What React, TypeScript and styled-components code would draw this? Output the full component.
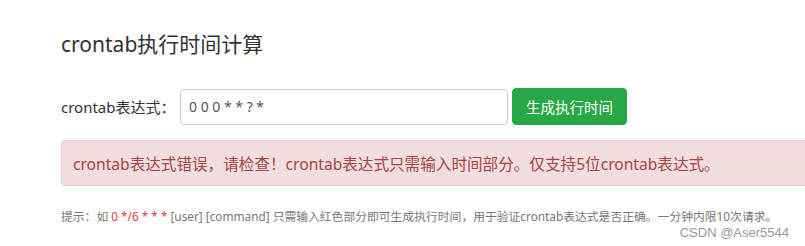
import React, { useState } from 'react';
import styled, { createGlobalStyle } from 'styled-components';

const GlobalStyle = createGlobalStyle`
  html, body {
    margin: 0;
    padding: 0;
    background: #fff;
    overflow: hidden;
  }
  body {
    font-family: "Noto Sans", "Noto Sans CJK SC", sans-serif;
    color: #333;
  }
`;

const Page = styled.div`
  position: relative;
  width: 805px;
  height: 246px;
  overflow: hidden;
`;

const Container = styled.div`
  width: 780px;
  padding: 24px 0 0 61px;
`;

const Title = styled.h3`
  margin: 0 0 24px;
  font-size: 21px;
  font-weight: 400;
  line-height: 40px;
  color: #333;
`;

const Form = styled.form`
  display: flex;
  align-items: center;
  margin-bottom: 15px;
`;

const Label = styled.label`
  font-size: 15px;
  color: #333;
  margin-right: 4px;
  width: 115px;
`;

const Input = styled.input`
  box-sizing: border-box;
  width: 328px;
  height: 36px;
  padding: 0 8px;
  font-family: "Noto Sans", "Noto Sans CJK SC", sans-serif;
  font-size: 14px;
  color: #555;
  border: 1px solid #ccc;
  border-radius: 4px;
  outline: none;
`;

const Button = styled.button`
  box-sizing: border-box;
  margin-left: 4px;
  height: 37px;
  padding: 0 13px;
  font-family: "Noto Sans CJK SC", sans-serif;
  font-size: 14.5px;
  color: #fff;
  background: #28a745;
  border: 1px solid #28a745;
  border-radius: 4px;
  cursor: pointer;
`;

const Alert = styled.div`
  box-sizing: border-box;
  width: 780px;
  height: 46px;
  display: flex;
  align-items: center;
  padding: 0 11px;
  font-size: 15.6px;
  color: #a94442;
  background: #f2dede;
  border: 1px solid #ebccd1;
  border-radius: 4px;
  white-space: nowrap;
`;

const Hint = styled.p`
  margin: 21px 0 0;
  font-size: 11.8px;
  color: #777;
  white-space: nowrap;
`;

const Red = styled.span`
  color: #e4393c;
`;

const Watermark = styled.div`
  position: absolute;
  right: 16px;
  bottom: 6px;
  font-family: "Liberation Sans", Arial, sans-serif;
  font-size: 13px;
  color: #999;
`;

export default function App() {
  const [expr, setExpr] = useState('0 0 0 * * ? *');

  return (
    <Page>
      <GlobalStyle />
      <Container>
        <Title>crontab执行时间计算</Title>
        <Form onSubmit={(e) => e.preventDefault()}>
          <Label htmlFor="expr">crontab表达式：</Label>
          <Input
            id="expr"
            type="text"
            value={expr}
            onChange={(e) => setExpr(e.target.value)}
          />
          <Button type="submit">生成执行时间</Button>
        </Form>
        <Alert>
          crontab表达式错误，请检查！crontab表达式只需输入时间部分。仅支持5位crontab表达式。
        </Alert>
        <Hint>
          提示：如 <Red>0 */6 * * *</Red> [user] [command]
          只需输入红色部分即可生成执行时间，用于验证crontab表达式是否正确。一分钟内限10次请求。
        </Hint>
      </Container>
      <Watermark>CSDN @Aser5544</Watermark>
    </Page>
  );
}
